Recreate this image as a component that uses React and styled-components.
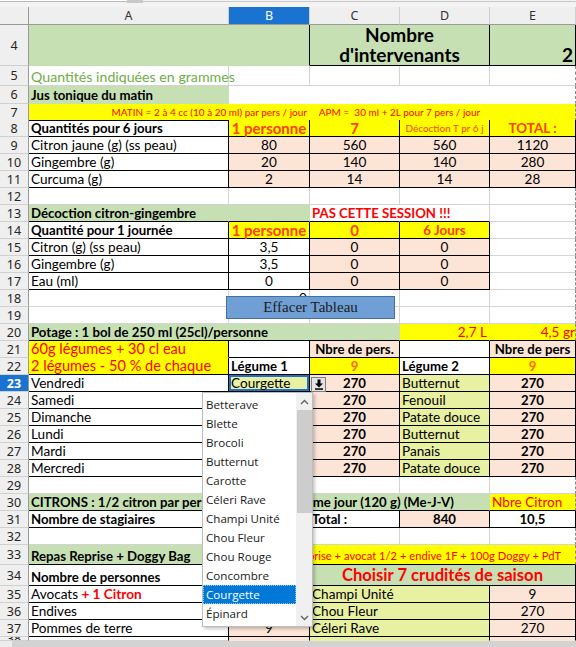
import styled, { createGlobalStyle } from 'styled-components';

/* --------------------------------- colours -------------------------------- */
const G = '#c6e0b4';
const Y = '#ffff00';
const P = '#fce4d6';
const L = '#e8f0a2';
const RED = '#ff0000';
const OR = '#ff3f00';
const OR9 = '#ff6a00';
const GT = '#70ad47';
const GRID = '#d4d4d4';
const TEMPLATE = '29px 200px 81px 90px 90px 86px';
const COLS = ['A', 'B', 'C', 'D', 'E'];
const JUSTIFY = { left: 'flex-start', center: 'center', right: 'flex-end' };

/* ---------------------------------- style --------------------------------- */
const GlobalStyle = createGlobalStyle`
  body {
    margin: 0;
    background: #fff;
    font-family: Lato, "Liberation Sans", sans-serif;
  }
`;

const Frame = styled.div`
  position: relative;
  width: 576px;
  height: 647px;
  overflow: hidden;
  background: #fff;
`;

const TopStrip = styled.div`
  display: flex;
  align-items: flex-start;
  height: 7px;
  background: #f3f3f3;
`;
const NameBox = styled.div`
  width: 127px;
  height: 1px;
  background: #fff;
  border-bottom: 1px solid #b8b8b8;
`;
const NameArrow = styled.div`
  width: 16px;
  height: 3px;
  background: #c9c9c9;
`;
const FormulaEdge = styled.div`
  flex: 1;
  height: 1px;
  border-bottom: 1px solid #c8c8c8;
`;

const Row = styled.div`
  display: grid;
  grid-template-columns: ${TEMPLATE};
  height: ${(p) => p.$h}px;
`;

const Corner = styled.div`
  background: #efefef;
  border-right: 1px solid #9a9a9a;
  border-bottom: 1px solid #9a9a9a;
`;
const ColHead = styled.div`
  display: flex;
  align-items: center;
  justify-content: center;
  background: ${(p) => (p.$active ? '#1a73d0' : '#efefef')};
  color: ${(p) => (p.$active ? '#fff' : '#333')};
  font-family: "Noto Sans", "Open Sans", sans-serif;
  font-size: 12.5px;
  border-right: 1px solid #cfcfcf;
  border-bottom: 1px solid #9a9a9a;
`;
const RowHead = styled.div`
  display: flex;
  align-items: center;
  justify-content: center;
  background: ${(p) => (p.$active ? '#1a73d0' : '#efefef')};
  color: ${(p) => (p.$active ? '#fff' : '#262626')};
  font-family: "Noto Sans", "Open Sans", sans-serif;
  font-size: 12.5px;
  font-weight: ${(p) => (p.$active ? 700 : 400)};
  border-right: 1px solid #9a9a9a;
  border-bottom: 1px solid #d0d0d0;
  overflow: hidden;
`;

const rightBorder = (p) => {
  if (p.$r) return '1px solid #000';
  if (p.$last) return '1px dashed #8a8a8a';
  if (p.$nr) return `1px solid ${p.$bg || 'transparent'}`;
  if (p.$bg) return `1px solid ${p.$bg}`;
  return `1px solid ${GRID}`;
};
const bottomBorder = (p) => {
  if (p.$b) return '1px solid #000';
  if (p.$nb || p.$bg) return `1px solid ${p.$bg || 'transparent'}`;
  return `1px solid ${GRID}`;
};
const fontSize = (p) => {
  if (p.$fs) return p.$fs;
  return p.$bold ? 13.2 : 13.6;
};

const Cell = styled.div`
  grid-column: span ${(p) => p.$span || 1};
  display: flex;
  align-items: ${(p) => (p.$mid ? 'center' : 'flex-end')};
  justify-content: ${(p) => JUSTIFY[p.$al || 'left']};
  text-align: ${(p) => p.$al || 'left'};
  padding: 0 ${(p) => p.$pr ?? 2}px 0 2px;
  min-width: 0;
  background: ${(p) => p.$bg || 'transparent'};
  color: ${(p) => p.$c || '#000'};
  font-weight: ${(p) => (p.$bold ? 700 : 400)};
  font-size: ${fontSize}px;
  line-height: ${(p) => (p.$wrap ? '20px' : '16px')};
  white-space: ${(p) => (p.$wrap ? 'normal' : 'nowrap')};
  border-right: ${rightBorder};
  border-bottom: ${bottomBorder};
  box-shadow: ${(p) => (p.$sel ? 'inset 0 0 0 2px #1f6fc8' : 'none')};
`;
const CellText = styled.span`
  display: block;
`;

const Accent = styled.span`
  color: ${RED};
  font-weight: 700;
`;

const ClearButton = styled.button`
  position: absolute;
  left: 226px;
  top: 296px;
  width: 169px;
  height: 23px;
  padding: 0;
  background: #6f9fd4;
  border: 1px solid #44709e;
  color: #1c1c1c;
  font-family: "Liberation Serif", serif;
  font-size: 15px;
`;

const DropTrigger = styled.div`
  position: absolute;
  left: 311px;
  top: 377px;
  width: 15px;
  height: 15px;
  box-sizing: border-box;
  display: flex;
  align-items: center;
  justify-content: center;
  background: #e4e4e4;
  border: 1px solid #7d7d7d;
`;

const List = styled.div`
  position: absolute;
  left: 202px;
  top: 392px;
  width: 111px;
  height: 235px;
  box-sizing: border-box;
  display: flex;
  background: #fff;
  border: 1px solid #bdbdbd;
  box-shadow: 2px 2px 3px rgba(0, 0, 0, 0.22);
  font-family: "Open Sans", "Noto Sans", sans-serif;
  font-size: 11.6px;
`;
const Options = styled.div`
  flex: 1;
  padding-top: 2px;
`;
const Option = styled.div`
  height: 19px;
  line-height: 19px;
  padding-left: 3px;
  background: ${(p) => (p.$sel ? '#0078d7' : 'transparent')};
  color: ${(p) => (p.$sel ? '#fff' : '#1a1a1a')};
  outline: ${(p) => (p.$sel ? '1px dotted #9cc7ee' : 'none')};
  outline-offset: -1px;
`;
const Track = styled.div`
  width: 16px;
  display: flex;
  flex-direction: column;
  align-items: center;
  background: #f0f0f0;
`;
const TrackArrow = styled.div`
  height: 17px;
  display: flex;
  align-items: center;
  justify-content: center;
`;
const Thumb = styled.div`
  width: 15px;
  height: 103px;
  background: #cdcdcd;
`;
const TrackGap = styled.div`
  flex: 1;
`;

const HScroll = styled.div`
  display: flex;
  height: 6px;
  background: #e2e2e2;
`;
const HScrollCap = styled.div`
  width: 12px;
  background: #ececec;
`;
const HScrollThumb = styled.div`
  flex: 1;
  background: #d3d3d3;
`;

/* ---------------------------------- data ---------------------------------- */
const box = { r: 1, b: 1 };
const head = { bold: 1, fs: 15, al: 'center', ...box };

const days = ['Vendredi', 'Samedi', 'Dimanche', 'Lundi', 'Mardi', 'Mercredi'];
const leg1 = ['Courgette', 'Carotte', 'Poireau', 'Potiron', 'Carotte', 'Poireau'];
const leg2 = ['Butternut', 'Fenouil', 'Patate douce', 'Butternut', 'Panais', 'Patate douce'];

const soupRows = days.map((d, i) => ({
  n: 23 + i,
  h: 17,
  active: i === 0,
  cells: {
    A: { t: d, ...box },
    B: { t: leg1[i], bg: L, sel: i === 0, ...box },
    C: { t: '270', bg: P, bold: 1, al: 'center', ...box },
    D: { t: leg2[i], bg: L, ...box },
    E: { t: '270', bg: P, bold: 1, al: 'center', ...box },
  },
}));

const rows = [
  {
    n: 4,
    h: 41,
    cells: {
      A: { bg: G },
      B: { bg: G, r: 1 },
      C: { span: 2, bg: G, bold: 1, fs: 19, al: 'center', mid: 1, wrap: 1, t: "Nombre d'intervenants", ...box },
      E: { bg: G, bold: 1, fs: 19, al: 'right', wrap: 1, t: '2', ...box },
    },
  },
  { n: 5, h: 20, cells: { A: { c: GT, fs: 14.2, t: 'Quantités indiquées en grammes' } } },
  {
    n: 6,
    h: 18,
    cells: {
      A: { bg: G, bold: 1, t: 'Jus tonique du matin' },
      B: { bg: '#fff' },
      C: { bg: '#fff' },
      D: { bg: '#fff' },
      E: { bg: '#fff' },
    },
  },
  {
    n: 7,
    h: 16,
    cells: {
      A: { span: 2, bg: Y, c: RED, fs: 10, al: 'right', b: 1, t: 'MATIN = 2 à 4 cc (10 à 20 ml) par pers / jour' },
      C: { span: 2, bg: Y, c: RED, fs: 10, al: 'center', b: 1, t: 'APM =\u00a0 30 ml + 2L pour 7 pers / jour' },
      E: { bg: Y, b: 1 },
    },
  },
  {
    n: 8,
    h: 17,
    cells: {
      A: { bold: 1, t: 'Quantités pour 6 jours', ...box },
      B: { bg: Y, c: OR, t: '1 personne', ...head },
      C: { bg: Y, c: OR, t: '7', ...head },
      D: { bg: Y, c: OR, fs: 10, al: 'center', t: 'Décoction T pr 6 j', ...box },
      E: { bg: Y, c: OR, t: 'TOTAL :', ...head, fs: 13.5 },
    },
  },
  ...[
    ['Citron jaune (g) (ss peau)', '80', '560', '560', '1120'],
    ['Gingembre (g)', '20', '140', '140', '280'],
    ['Curcuma (g)', '2', '14', '14', '28'],
  ].map(([a, b, c, d, e], i) => ({
    n: 9 + i,
    h: 17,
    cells: {
      A: { t: a, ...box },
      B: { t: b, bg: P, al: 'center', ...box },
      C: { t: c, bg: P, al: 'center', ...box },
      D: { t: d, bg: P, al: 'center', ...box },
      E: { t: e, bg: P, al: 'center', ...box },
    },
  })),
  { n: 12, h: 17, cells: {} },
  {
    n: 13,
    h: 17,
    cells: {
      A: { bg: G, bold: 1, b: 1, t: 'Décoction citron-gingembre' },
      B: { bg: G, b: 1 },
      C: { c: RED, bold: 1, fs: 13.2, b: 1, nr: 1, t: 'PAS CETTE SESSION !!!' },
      D: { b: 1 },
    },
  },
  {
    n: 14,
    h: 17,
    cells: {
      A: { bold: 1, t: 'Quantité pour 1 journée', ...box },
      B: { bg: Y, c: OR, t: '1 personne', ...head },
      C: { bg: Y, c: OR, t: '0', ...head },
      D: { bg: Y, c: OR, t: '6 Jours', ...head, fs: 13.5 },
    },
  },
  ...[
    ['Citron (g) (ss peau)', '3,5'],
    ['Gingembre (g)', '3,5'],
    ['Eau (ml)', '0'],
  ].map(([a, b], i) => ({
    n: 15 + i,
    h: 17,
    cells: {
      A: { t: a, ...box },
      B: { t: b, al: 'center', ...box },
      C: { t: '0', bg: P, al: 'center', ...box },
      D: { t: '0', bg: P, al: 'center', ...box },
    },
  })),
  { n: 18, h: 17, cells: { B: { t: '0', al: 'right' } } },
  { n: 19, h: 17, cells: {} },
  {
    n: 20,
    h: 17,
    cells: {
      A: { span: 3, bg: G, bold: 1, b: 1, t: 'Potage : 1 bol de 250 ml (25cl)/personne' },
      D: { bg: Y, c: RED, al: 'right', b: 1, t: '2,7 L' },
      E: { bg: Y, c: RED, al: 'right', pr: 0, b: 1, t: '4,5 gr' },
    },
  },
  {
    n: 21,
    h: 17,
    cells: {
      A: { bg: Y, c: RED, fs: 14.6, r: 1, nb: 1, t: '60g légumes + 30 cl eau' },
      B: { ...box },
      C: { bg: P, bold: 1, al: 'center', t: 'Nbre de pers.', ...box },
      D: { ...box },
      E: { bg: P, bold: 1, al: 'center', t: 'Nbre de pers', ...box },
    },
  },
  {
    n: 22,
    h: 17,
    cells: {
      A: { bg: Y, c: RED, fs: 14.6, t: '2 légumes - 50 % de chaque', ...box },
      B: { bold: 1, t: 'Légume 1', ...box },
      C: { bg: Y, c: OR9, bold: 1, al: 'center', t: '9', ...box },
      D: { bold: 1, t: 'Légume 2', ...box },
      E: { bg: Y, c: OR9, bold: 1, al: 'center', t: '9', ...box },
    },
  },
  ...soupRows,
  { n: 29, h: 17, cells: {} },
  {
    n: 30,
    h: 17,
    cells: {
      A: { span: 4, bg: G, bold: 1, b: 1, t: 'CITRONS : 1/2 citron par personne / prise le même jour (120 g) (Me-J-V)' },
      E: { bg: Y, c: RED, b: 1, t: 'Nbre Citron' },
    },
  },
  {
    n: 31,
    h: 17,
    cells: {
      A: { bold: 1, t: 'Nombre de stagiaires', ...box },
      B: { ...box },
      C: { bold: 1, t: 'Total :', ...box },
      D: { bg: P, bold: 1, al: 'center', t: '840', ...box },
      E: { bold: 1, al: 'center', t: '10,5', ...box },
    },
  },
  { n: 32, h: 17, cells: {} },
  {
    n: 33,
    h: 20,
    cells: {
      A: { bg: G, bold: 1, b: 1, t: 'Repas Reprise + Doggy Bag' },
      B: { span: 4, bg: Y, c: RED, fs: 11.2, al: 'right', pr: 14, b: 1, t: 'Reprise + avocat 1/2 + endive 1F + 100g Doggy + PdT' },
    },
  },
  {
    n: 34,
    h: 21,
    cells: {
      A: { bold: 1, t: 'Nombre de personnes', ...box },
      B: { bg: G, b: 1 },
      C: { span: 3, bg: G, c: RED, bold: 1, fs: 16.6, al: 'center', mid: 1, t: 'Choisir 7 crudités de saison', ...box },
    },
  },
  ...[
    [<>Avocats<Accent> + 1 Citron</Accent></>, '9', 'Champi Unité', '9'],
    ['Endives', '9', 'Chou Fleur', '270'],
    ['Pommes de terre', '9', 'Céleri Rave', '270'],
  ].map(([a, b, c, e], i) => ({
    n: 35 + i,
    h: 17,
    cells: {
      A: { t: a, ...box },
      B: { t: b, bg: P, al: 'center', ...box },
      C: { span: 2, t: c, bg: L, ...box },
      E: { t: e, bg: P, al: 'center', ...box },
    },
  })),
  {
    n: 38,
    h: 4,
    cells: {
      A: { r: 1 },
      B: { bg: P, r: 1 },
      C: { span: 2, bg: L, r: 1 },
      E: { bg: P, r: 1 },
    },
  },
];

const choices = [
  'Betterave', 'Blette', 'Brocoli', 'Butternut', 'Carotte', 'Céleri Rave',
  'Champi Unité', 'Chou Fleur', 'Chou Rouge', 'Concombre', 'Courgette', 'Épinard',
];

/* -------------------------------- component ------------------------------- */
const SheetRow = ({ row }) => {
  const out = [];
  let i = 0;
  while (i < COLS.length) {
    const key = COLS[i];
    const s = row.cells[key] || {};
    const span = s.span || 1;
    out.push(
      <Cell
        key={key}
        $span={span}
        $last={i + span === COLS.length}
        $bg={s.bg}
        $c={s.c}
        $bold={s.bold}
        $fs={s.fs}
        $al={s.al}
        $mid={s.mid}
        $wrap={s.wrap}
        $pr={s.pr}
        $r={s.r}
        $b={s.b}
        $nr={s.nr}
        $nb={s.nb}
        $sel={s.sel}
      >
        {s.t !== undefined && <CellText>{s.t}</CellText>}
      </Cell>
    );
    i += span;
  }
  return (
    <Row $h={row.h}>
      <RowHead $active={row.active}>{row.n}</RowHead>
      {out}
    </Row>
  );
};

const DownArrowIcon = () => (
  <svg width="10" height="11" viewBox="0 0 10 11">
    <path d="M3.5 0.5h3v4h2.5L5 8.5 1 4.5h2.5z" fill="#000" />
    <rect x="1" y="9.3" width="8" height="1.5" fill="#000" />
  </svg>
);

const Chevron = ({ up }) => (
  <svg width="9" height="6" viewBox="0 0 9 6">
    <path d={up ? 'M1 5l3.5-3.5L8 5' : 'M1 1l3.5 3.5L8 1'} fill="none" stroke="#606060" strokeWidth="1.3" />
  </svg>
);

const App = () => (
  <Frame>
    <GlobalStyle />
    <TopStrip>
      <NameBox />
      <NameArrow />
      <FormulaEdge />
    </TopStrip>
    <Row $h={18}>
      <Corner />
      {COLS.map((c) => (
        <ColHead key={c} $active={c === 'B'}>
          {c}
        </ColHead>
      ))}
    </Row>
    {rows.map((r) => (
      <SheetRow key={r.n} row={r} />
    ))}
    <HScroll>
      <HScrollCap />
      <HScrollThumb />
    </HScroll>

    <ClearButton type="button">Effacer Tableau</ClearButton>
    <DropTrigger>
      <DownArrowIcon />
    </DropTrigger>
    <List>
      <Options>
        {choices.map((c) => (
          <Option key={c} $sel={c === 'Courgette'}>
            {c}
          </Option>
        ))}
      </Options>
      <Track>
        <TrackArrow>
          <Chevron up />
        </TrackArrow>
        <Thumb />
        <TrackGap />
        <TrackArrow>
          <Chevron />
        </TrackArrow>
      </Track>
    </List>
  </Frame>
);

export default App;
